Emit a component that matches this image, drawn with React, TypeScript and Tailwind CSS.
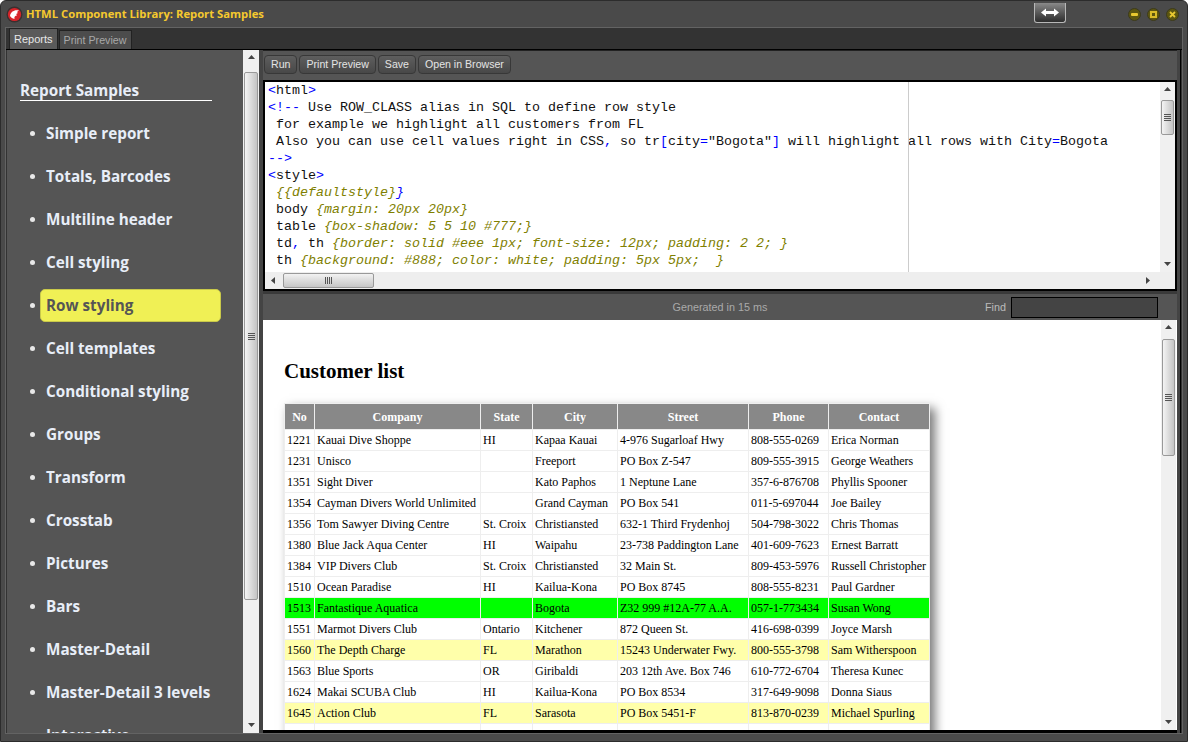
const sideItems = [
  'Simple report',
  'Totals, Barcodes',
  'Multiline header',
  'Cell styling',
  'Row styling',
  'Cell templates',
  'Conditional styling',
  'Groups',
  'Transform',
  'Crosstab',
  'Pictures',
  'Bars',
  'Master-Detail',
  'Master-Detail 3 levels',
  'Interactive',
];

const rows = [
  ['1221', 'Kauai Dive Shoppe', 'HI', 'Kapaa Kauai', '4-976 Sugarloaf Hwy', '808-555-0269', 'Erica Norman'],
  ['1231', 'Unisco', '', 'Freeport', 'PO Box Z-547', '809-555-3915', 'George Weathers'],
  ['1351', 'Sight Diver', '', 'Kato Paphos', '1 Neptune Lane', '357-6-876708', 'Phyllis Spooner'],
  ['1354', 'Cayman Divers World Unlimited', '', 'Grand Cayman', 'PO Box 541', '011-5-697044', 'Joe Bailey'],
  ['1356', 'Tom Sawyer Diving Centre', 'St. Croix', 'Christiansted', '632-1 Third Frydenhoj', '504-798-3022', 'Chris Thomas'],
  ['1380', 'Blue Jack Aqua Center', 'HI', 'Waipahu', '23-738 Paddington Lane', '401-609-7623', 'Ernest Barratt'],
  ['1384', 'VIP Divers Club', 'St. Croix', 'Christiansted', '32 Main St.', '809-453-5976', 'Russell Christopher'],
  ['1510', 'Ocean Paradise', 'HI', 'Kailua-Kona', 'PO Box 8745', '808-555-8231', 'Paul Gardner'],
  ['1513', 'Fantastique Aquatica', '', 'Bogota', 'Z32 999 #12A-77 A.A.', '057-1-773434', 'Susan Wong'],
  ['1551', 'Marmot Divers Club', 'Ontario', 'Kitchener', '872 Queen St.', '416-698-0399', 'Joyce Marsh'],
  ['1560', 'The Depth Charge', 'FL', 'Marathon', '15243 Underwater Fwy.', '800-555-3798', 'Sam Witherspoon'],
  ['1563', 'Blue Sports', 'OR', 'Giribaldi', '203 12th Ave. Box 746', '610-772-6704', 'Theresa Kunec'],
  ['1624', 'Makai SCUBA Club', 'HI', 'Kailua-Kona', 'PO Box 8534', '317-649-9098', 'Donna Siaus'],
  ['1645', 'Action Club', 'FL', 'Sarasota', 'PO Box 5451-F', '813-870-0239', 'Michael Spurling'],
];

const heads = ['No', 'Company', 'State', 'City', 'Street', 'Phone', 'Contact'];
const colWidths = ['w-[30px]', 'w-[166px]', 'w-[52px]', 'w-[85px]', 'w-[131px]', 'w-[80px]', 'w-[101px]'];

function Grip({ horizontal = false }: { horizontal?: boolean }) {
  return (
    <div className={horizontal ? 'flex gap-px h-[7px]' : 'flex flex-col gap-px w-[7px]'}>
      {[0, 1, 2, 3].map((i) => (
        <div key={i} className={horizontal ? 'w-px h-full bg-[#555]' : 'h-px w-full bg-[#555]'} />
      ))}
    </div>
  );
}

function Arrow({ dir }: { dir: 'up' | 'down' | 'left' | 'right' }) {
  const points = {
    up: '0,4 7,4 3.5,0',
    down: '0,0 7,0 3.5,4',
    left: '4,0 4,7 0,3.5',
    right: '0,0 0,7 4,3.5',
  }[dir];
  return (
    <svg width="7" height="7" viewBox="0 0 7 7" className={dir === 'down' ? 'mt-[3px]' : ''}>
      <polygon points={points} fill="#444" />
    </svg>
  );
}

function VScroll({ topGap, thumb, className }: { topGap: string; thumb: string; className: string }) {
  return (
    <div className={`flex flex-col items-center bg-[#f0f0f0] ${className}`}>
      <div className="h-[17px] flex items-center justify-center shrink-0">
        <Arrow dir="up" />
      </div>
      <div className="flex-1 w-full min-h-0">
        <div className={`${topGap} ${thumb} mx-px flex items-center justify-center rounded-[2px] border border-[#999] bg-gradient-to-r from-[#f4f4f4] to-[#c4c4c4]`}>
          <Grip />
        </div>
      </div>
      <div className="h-[17px] flex items-center justify-center shrink-0">
        <Arrow dir="down" />
      </div>
    </div>
  );
}

function ToolButton({ label }: { label: string }) {
  return (
    <button className="h-[19px] px-[6px] rounded-[4px] border border-[#383838] bg-gradient-to-b from-[#5e5e5e] to-[#484848] text-[10.6px] leading-none text-[#e4e4e4]">
      {label}
    </button>
  );
}

function WinButton({ children }: { children: React.ReactNode }) {
  return (
    <div className="w-[13px] h-[13px] rounded-full bg-[#5c5610] border border-[#3c3a1c] flex items-center justify-center">
      {children}
    </div>
  );
}

const kw = 'text-[#00f]';
const css = 'italic text-[#808000]';

function CodeLines() {
  return (
    <pre className="font-['Liberation_Mono',monospace] text-[13.33px] leading-[17px] text-[#111] pl-[3px]">
      <div><span className={kw}>&lt;</span>html<span className={kw}>&gt;</span></div>
      <div><span className={kw}>&lt;!--</span> Use ROW_CLASS alias in SQL to define row style</div>
      <div> for example we highlight all customers from FL</div>
      <div> Also you can use cell values right in CSS<span className={kw}>,</span> so tr<span className={kw}>[</span>city<span className={kw}>=</span>"Bogota"<span className={kw}>]</span> will highlight all rows with City<span className={kw}>=</span>Bogota</div>
      <div className={kw}>--&gt;</div>
      <div><span className={kw}>&lt;</span>style<span className={kw}>&gt;</span></div>
      <div> <span className={css}>{'{{defaultstyle}'}</span><span className="italic text-[#00f]">{'}'}</span></div>
      <div> body <span className={css}>{'{margin: 20px 20px}'}</span></div>
      <div> table <span className={css}>{'{box-shadow: 5 5 10 #777;}'}</span></div>
      <div> td<span className={kw}>,</span> th <span className={css}>{'{border: solid #eee 1px; font-size: 12px; padding: 2 2; }'}</span></div>
      <div> th <span className={css}>{'{background: #888; color: white; padding: 5px 5px;  }'}</span></div>
    </pre>
  );
}

export default function App() {
  return (
    <div className="w-[1188px] h-[742px] flex flex-col overflow-hidden rounded-t-[6px] border border-[#2c2c2c] bg-[#4a4a4a] font-['Liberation_Sans',sans-serif]">
      {/* Title bar */}
      <div className="h-[26px] shrink-0 flex items-center pl-[5px] pr-[7px]">
        <svg width="17" height="17" viewBox="0 0 17 17" className="shrink-0">
          <circle cx="8.5" cy="8.5" r="8" fill="#3a3030" />
          <circle cx="8.5" cy="8.5" r="6.6" fill="#d8242a" />
          <path d="M4 10 C4.5 6 8 3.5 13 4.5 C11 5.5 10.5 6.5 12 7 C10 7.5 10 8.5 11 9.5 C9 9.5 8 11 8.5 13 C6.5 12.5 5 11.5 4 10 Z" fill="#fff" />
        </svg>
        <div className="ml-[3px] font-['Open_Sans',sans-serif] font-bold text-[11.25px] text-[#f5c92e]">
          HTML Component Library: Report Samples
        </div>
        <div className="ml-auto mr-[62px] w-[32px] h-[20px] -mt-[2px] flex items-center justify-center rounded-b-[3px] border border-t-0 border-[#b8b8b8] bg-gradient-to-b from-[#8a8a8a] via-[#5a5a5a] to-[#2e2e2e]">
          <svg width="18" height="9" viewBox="0 0 18 9">
            <path d="M0 4.5 L5 0.5 V3 H13 V0.5 L18 4.5 L13 8.5 V6 H5 V8.5 Z" fill="#fff" />
          </svg>
        </div>
        <div className="flex gap-[6px] mr-[1px]">
          <WinButton><div className="w-[7px] h-[3px] rounded-[1px] bg-[#e8c830]" /></WinButton>
          <WinButton><div className="w-[7px] h-[7px] border-2 border-[#d8bc28]" /></WinButton>
          <WinButton>
            <svg width="7" height="7" viewBox="0 0 7 7"><path d="M1 1 L6 6 M6 1 L1 6" stroke="#e8c830" strokeWidth="1.8" /></svg>
          </WinButton>
        </div>
      </div>

      {/* Tab pane */}
      <div className="flex-1 min-h-0 mx-[4px] mb-[7px] flex flex-col border border-[#636363] bg-[#333]">
        <div className="h-[22px] shrink-0 flex items-end pl-[3px] gap-px border-b border-black">
          <div className="h-[21px] px-[4px] flex items-center bg-[#5a5a5a] border border-[#222] border-b-0 text-[11px] text-[#e8e8e8]">
            Reports
          </div>
          <div className="h-[19px] px-[4px] flex items-center bg-[#4c4c4c] border border-[#222] border-b-0 text-[10.7px] text-[#a8a8a8]">
            Print Preview
          </div>
        </div>

        <div className="flex-1 min-h-0 flex mx-[1px] bg-[#444] border-r border-black">
          {/* Sidebar */}
          <div className="w-[236px] shrink-0 overflow-hidden bg-[#555] pl-[13px] pt-[30px] font-['Open_Sans',sans-serif] font-bold text-[#e8eef8]">
            <div className="w-[192px] h-[21px] border-b border-white text-[15.25px] leading-[20px]">Report Samples</div>
            <ul className="mt-[11px]">
              {sideItems.map((item) => (
                <li key={item} className="h-[43px] flex items-center">
                  <div className="w-[5px] h-[5px] rounded-full bg-[#e8e8e8] ml-[10px] mr-[5px] shrink-0" />
                  {item === 'Row styling' ? (
                    <div className="w-[181px] h-[33px] pl-[5px] flex items-center rounded-[5px] border border-[#c9c94a] bg-[#f0f055] text-[15.25px] text-[#555]">
                      {item}
                    </div>
                  ) : (
                    <div className="pl-[6px] text-[15.25px]">{item}</div>
                  )}
                </li>
              ))}
            </ul>
          </div>
          <VScroll className="w-[16px] shrink-0" topGap="mt-[5px]" thumb="h-[528px]" />

          {/* Main column */}
          <div className="flex-1 min-w-0 flex flex-col ml-[4px] mr-[3px] bg-[#555]">
            <div className="h-[30px] shrink-0 flex items-center gap-[2px] pl-[1px] pb-[3px] border-t border-[#222]">
              <ToolButton label="Run" />
              <ToolButton label="Print Preview" />
              <ToolButton label="Save" />
              <ToolButton label="Open in Browser" />
            </div>

            {/* Editor */}
            <div className="h-[211px] shrink-0 flex flex-col border-2 border-black bg-white">
              <div className="flex-1 min-h-0 flex">
                <div className="flex-1 min-w-0 overflow-hidden relative">
                  <CodeLines />
                  <div className="absolute top-0 bottom-0 left-[643px] w-px bg-[#ccc]" />
                </div>
                <VScroll className="w-[15px] shrink-0" topGap="mt-px" thumb="h-[35px]" />
              </div>
              <div className="h-[17px] shrink-0 flex items-center bg-[#eee]">
                <div className="w-[18px] flex justify-center"><Arrow dir="left" /></div>
                <div className="w-[91px] h-[15px] flex items-center justify-center rounded-[2px] border border-[#999] bg-gradient-to-b from-[#f2f2f2] to-[#c6c6c6]">
                  <Grip horizontal />
                </div>
                <div className="ml-auto mr-[22px]"><Arrow dir="right" /></div>
              </div>
            </div>

            {/* Status */}
            <div className="h-[29px] shrink-0 grid grid-cols-[1fr_auto_1fr] items-center pt-px text-[10.8px] border-t-[3px] border-[#3a3a3a]">
              <div />
              <div className="text-[#aaa]">Generated in 15 ms</div>
              <div className="flex items-center justify-end">
                <div className="text-[#bbb] mr-[5px]">Find</div>
                <div className="w-[147px] h-[21px] mr-[19px] bg-[#444] border border-black" />
              </div>
            </div>

            {/* Preview */}
            <div className="flex-1 min-h-0 flex bg-white border-b-[3px] border-black">
              <div className="flex-1 min-w-0 overflow-hidden pl-[21px] pt-[37px] font-['Liberation_Serif',serif]">
                <h1 className="text-[21px] font-bold leading-[28px] text-black">Customer list</h1>
                <table className="mt-[18px] w-[645px] table-fixed border-collapse shadow-[5px_5px_10px_#777] text-[12px] text-black">
                  <colgroup>
                    {colWidths.map((w) => <col key={w} className={w} />)}
                  </colgroup>
                  <thead>
                    <tr className="h-[26px] bg-[#888]">
                      {heads.map((h) => (
                        <th key={h} className="border border-[#eee] font-bold text-white text-center">{h}</th>
                      ))}
                    </tr>
                  </thead>
                  <tbody>
                    {rows.map((r) => {
                      const bg = r[0] === '1513' ? 'bg-[#00ff00]' : r[2] === 'FL' ? 'bg-[#ffffaa]' : 'bg-white';
                      return (
                        <tr key={r[0]} className={`h-[21px] ${bg}`}>
                          {r.map((c, i) => (
                            <td key={i} className="border border-[#eee] pl-[2px] whitespace-nowrap overflow-hidden">{c}</td>
                          ))}
                        </tr>
                      );
                    })}
                    <tr className="h-[21px] bg-white">
                      {heads.map((h) => <td key={h} className="border border-[#eee]" />)}
                    </tr>
                  </tbody>
                </table>
              </div>
              <VScroll className="w-[15px] shrink-0 mr-px" topGap="mt-[2px]" thumb="h-[117px]" />
            </div>
          </div>
        </div>
      </div>
    </div>
  );
}
